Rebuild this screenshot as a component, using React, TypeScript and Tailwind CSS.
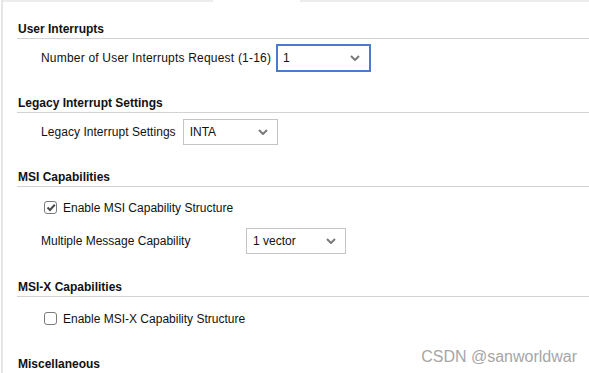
import React from "react";

const Chevron = () => (
  <svg width="10" height="6" viewBox="0 0 10 6" className="shrink-0">
    <path d="M1 1 L5 5 L9 1" fill="none" stroke="#7a7a7a" strokeWidth="2" />
  </svg>
);

const Header = ({ children, className = "" }: { children: React.ReactNode; className?: string }) => (
  <div className={"ml-[17px] border-b border-[#d2d2d2] pb-[1px] " + className}>
    <div className="pl-px text-[12px] leading-[16px] font-bold text-[#111]">{children}</div>
  </div>
);

const Checkbox = ({ checked }: { checked: boolean }) => (
  <div className="w-[13px] h-[13px] rounded-[3px] border border-[#7b7b7b] bg-white flex items-center justify-center shrink-0">
    {checked && (
      <svg width="10" height="9" viewBox="0 0 10 9">
        <path d="M1.5 4.5 L4 7 L8.8 1.8" fill="none" stroke="#4a4a4a" strokeWidth="2" />
      </svg>
    )}
  </div>
);

export default function App() {
  return (
    <div className="relative w-[589px] h-[373px] overflow-hidden bg-white text-[#111]" style={{ fontFamily: '"Liberation Sans", Arial, sans-serif' }}>
      <div className="flex h-full">
        <div className="w-px" />
        <div className="w-[2px] bg-[#e6e6e6]" />
        <div className="flex-1 flex flex-col">
          <div className="flex h-[2px]">
            <div className="w-[210px] bg-[#ececec]" />
            <div className="w-[87px]" />
            <div className="flex-1 bg-[#ececec]" />
          </div>
          <div className="flex flex-col -ml-[3px]">
            <Header className="mt-[19px]">User Interrupts</Header>
            <div className="flex items-center mt-[5px] ml-[41px]">
              <span className="text-[12px] leading-[16px] tracking-[0.2px]">Number of User Interrupts Request (1-16)</span>
              <div className="ml-[5px] w-[95px] h-[28px] border-2 border-[#4a7bd0] flex items-center justify-between pl-[5px] pr-[9px]">
                <span className="text-[12px]">1</span>
                <Chevron />
              </div>
            </div>
            <Header className="mt-[23px]">Legacy Interrupt Settings</Header>
            <div className="flex items-center mt-[6px] ml-[41px]">
              <span className="text-[12px] leading-[16px] tracking-[0.05px]">Legacy Interrupt Settings</span>
              <div className="ml-[7px] w-[95px] h-[26px] border border-[#c4c4c4] flex items-center justify-between pl-[6px] pr-[9px]">
                <span className="text-[12px]">INTA</span>
                <Chevron />
              </div>
            </div>
            <Header className="mt-[24px]">MSI Capabilities</Header>
            <div className="flex items-center mt-[14px] ml-[44px] h-[13px]">
              <Checkbox checked />
              <span className="ml-[6px] text-[12px] leading-[16px]">Enable MSI Capability Structure</span>
            </div>
            <div className="flex items-center mt-[14px] ml-[41px]">
              <span className="w-[205px] text-[12px] leading-[16px]">Multiple Message Capability</span>
              <div className="w-[100px] h-[26px] border border-[#c4c4c4] flex items-center justify-between pl-[6px] pr-[9px]">
                <span className="text-[12px]">1 vector</span>
                <Chevron />
              </div>
            </div>
            <Header className="mt-[25px]">MSI-X Capabilities</Header>
            <div className="flex items-center mt-[15px] ml-[44px] h-[13px]">
              <Checkbox checked={false} />
              <span className="ml-[6px] text-[12px] leading-[16px]">Enable MSI-X Capability Structure</span>
            </div>
            <div className="ml-[17px] mt-[31px] pl-px text-[12px] leading-[16px] font-bold">Miscellaneous</div>
          </div>
        </div>
      </div>
      <div className="absolute right-[12px] top-[347px] text-[16px] leading-[19px] text-[#a6a6a6]">CSDN @sanworldwar</div>
    </div>
  );
}
